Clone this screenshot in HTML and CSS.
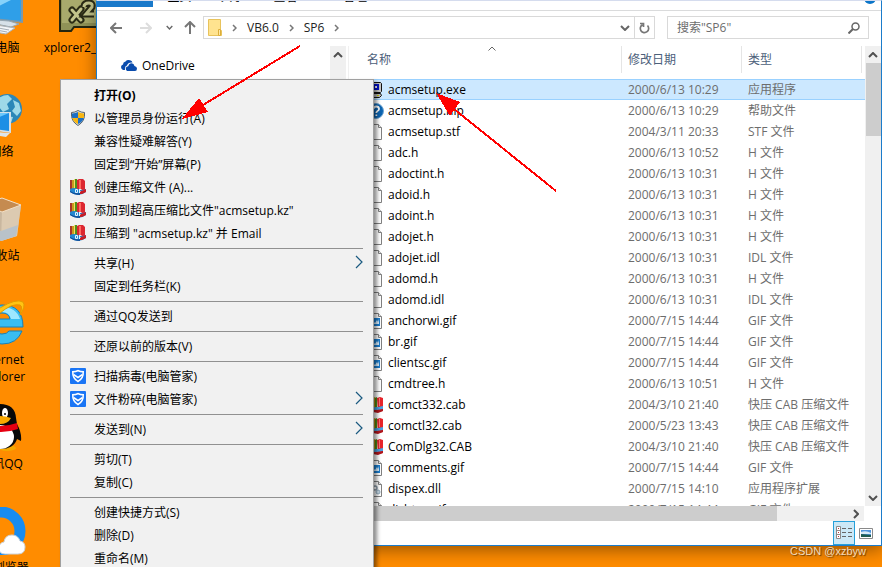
FILE: index.html
```html
<!DOCTYPE html>
<html lang="zh-CN">
<head>
  <meta charset="UTF-8" />
  <title>SP6</title>
  <link rel="stylesheet" href="styles.css">
  <script src="files.js" defer></script>
</head>
<body>
  <svg class="symbols" aria-hidden="true">
    <symbol id="doc" viewBox="0 0 16 16">
      <path d="M2.500 .5h8l3 3v12h-11z" fill="#fff" stroke="#808080"/>
      <path d="M10.500 .5v3h3" fill="#eee" stroke="#808080"/>
    </symbol>
    <symbol id="gif" viewBox="0 0 16 16">
      <use href="#doc"/>
      <path d="M4 5h8v8H4z" fill="#1c7fd0"/>
      <path d="M5 11V8l2 2 2-3 1 2 1-3v5z" fill="#d9efff"/>
    </symbol>
    <symbol id="dll" viewBox="0 0 16 16">
      <use href="#doc"/>
      <circle cx="7" cy="7" r="2" fill="none" stroke="#8a9aa8" stroke-width="1.500"/>
      <circle cx="10" cy="11" r="2" fill="#c6d9e6" stroke="#8fa9bc"/>
    </symbol>
    <symbol id="cab" viewBox="0 0 16 16">
      <path d="M0 1l2-1 3 1v13l-5-1z" fill="#b32025"/>
      <path d="M4 1l2-1 2 1v13H4z" fill="#c79a14"/>
      <path d="M7 1l2-1v14H7z" fill="#4f8a14"/>
      <path d="M9 1l3-1 3 1v13l-5 1z" fill="#e8252b"/>
      <path d="M11 1h1v8h-1z" fill="#ff7d72"/>
      <path d="M0 10q8 1 15-1v3q-7 2-15 0z" fill="#4aa3e4"/>
      <path d="M0 12q8 2 15 0v2l-5 2-10-2z" fill="#b0161c"/>
    </symbol>
    <symbol id="exe" viewBox="0 0 16 16">
      <path d="M2.500 .5h10l1 1v8l-1 1h-10z" fill="#c9c9c9" stroke="#111"/>
      <path d="M4 2h7v6H4z" fill="#0010c8"/>
      <path d="M7 4h2v2H7z" fill="#fff"/>
      <path d="M3.500 11.500h9l1 2-2 2h-8z" fill="#bbb" stroke="#111"/>
      <path d="M9 13h2v1H9z" fill="#c7c700"/>
    </symbol>
    <symbol id="hlp" viewBox="0 0 16 16">
      <circle cx="8" cy="8" r="7.500" fill="#0d64b0" stroke="#6fa5d2"/>
      <path d="M5.500 6q0-2.500 2.700-2.500T11 6q0 1.200-1.500 2Q8.300 8.600 8.300 10M8.300 11.500v1.500" fill="none" stroke="#fff" stroke-width="1.800"/>
    </symbol>
    <symbol id="kz" viewBox="0 0 16 16">
      <path d="M0 1h2v11H0z" fill="#a8342a"/>
      <path d="M2 1h2v11H2z" fill="#c99a1e"/>
      <path d="M4 0h1v12H4z" fill="#f3df62"/>
      <path d="M5 0h2v12H5z" fill="#4d8f1b"/>
      <path d="M7 1l2-1h4l2 2v11l-3 2H7z" fill="#dc2730"/>
      <path d="M9 1h2v9H9z" fill="#ff6a60"/>
      <path d="M0 10q4-2 8 0t8 0v3q-4 3-8 3t-8-3z" fill="#2387d0"/>
      <path d="M0 12q5 3 10 2v2q-6 0-10-3z" fill="#124f9a"/>
      <path d="M10 12q3 0 6-2v3l-4 2h-2z" fill="#c91c24"/>
      <path d="M5.500 10.500h2v3h-2zM9.500 10.500h2M9.500 10v4M9.500 12.500h1" fill="none" stroke="#dff3ff"/>
    </symbol>
    <symbol id="guard" viewBox="0 0 16 16">
      <rect width="16" height="16" rx="1" fill="#1a75f5"/>
      <path d="M8 1.800q2.500 1.200 6 1.200Q14.500 11 8 14.500 1.500 11 2 3 5.500 3 8 1.800z" fill="#fff"/>
      <path d="M8 3.500Q10 4.500 12.500 4.500 12.500 10 8 12.500 3.500 10 3.500 4.500 6 4.500 8 3.500z" fill="#1a75f5"/>
      <path d="M3.500 5.500L8 8.500l4.500-3v2L8 10.500l-4.500-3z" fill="#fff"/>
    </symbol>
    <symbol id="uac" viewBox="0 0 16 16">
      <path d="M8 .5Q11 2.500 14.500 2.500 15.500 11 8 15.500.5 11 1.500 2.500 5 2.500 8 .5z" fill="#dfe5e9" stroke="#56626b"/>
      <path d="M8 2v6H2.200q-.4-2.500-.2-4.500Q5.500 3.300 8 2z" fill="#1c6fc4"/>
      <path d="M8 2v6h5.800q.4-2.500.2-4.500Q10.500 3.300 8 2z" fill="#f7b512"/>
      <path d="M8 14V8H2.200Q3.500 12 8 14z" fill="#f7b512"/>
      <path d="M8 14V8h5.800Q12.500 12 8 14z" fill="#1c6fc4"/>
    </symbol>
    <symbol id="more" viewBox="0 0 8 14">
      <path d="M1 1l6 6-6 6" fill="none" stroke="#1a5a80" stroke-width="1.200"/>
    </symbol>
    <symbol id="sep" viewBox="0 0 5 8">
      <path d="M1 1l3 3-3 3" fill="none" stroke="#777" stroke-width="1.500"/>
    </symbol>
    <symbol id="chev" viewBox="0 0 10 6">
      <path d="M1 1l4 4 4-4" fill="none" stroke="currentColor" stroke-width="2"/>
    </symbol>
  </svg>

  <main class="desktop">
    <ul class="shortcuts">
      <li>
        <svg width="48" height="48" viewBox="0 0 48 48">
          <path d="M4 11l41-4v29L4 31z" fill="#7d98a8"/>
          <path d="M5 12l38-4v26L5 30z" fill="#2f9fe8"/>
          <path d="M5 12l38-4L5 27z" fill="#86d2fa"/>
          <path d="M18 33l13 1 10 3-8 3-20-4z" fill="#d7e1e8" stroke="#93a5b2"/>
          <path d="M12 37l25 4-9 6-22-4z" fill="#f4f6f8" stroke="#aab4bc"/>
          <path d="M15 40l16 3M13 42l16 3" stroke="#a4aeb6"/>
        </svg>
        <span>此电脑</span>
      </li>
      <li>
        <svg width="48" height="48" viewBox="0 0 48 48">
          <path d="M5 4h40v36H19l-3 4H5z" fill="#8f9257" stroke="#25260f" stroke-width="2"/>
          <path d="M7 6h36v30H7z" fill="#a8aa6c"/>
          <path d="M17 23l9 10M26 22L17 33" stroke="#2b2c16" stroke-width="7" stroke-linecap="round"/>
          <path d="M17 23l9 10M26 22L17 33" stroke="#c3c58b" stroke-width="3" stroke-linecap="round"/>
          <path d="M29 20q0-4 5-4 4 0 3 4l-6 7h8" fill="none" stroke="#2b2c16" stroke-width="7"/>
          <path d="M29 20q0-4 5-4 4 0 3 4l-6 7h8" fill="none" stroke="#c3c58b" stroke-width="3"/>
        </svg>
        <span>xplorer2_lite</span>
      </li>
      <li>
        <svg width="48" height="48" viewBox="0 0 48 48">
          <circle cx="29" cy="18" r="15" fill="#2b87b8"/>
          <path d="M17 10q6-6 13-6l4 4-5 5 2 5-6 3-4-5zM35 9l6 3 2 8-4 5-5-5 3-4zM27 25l8 1-2 6z" fill="#9ed9e8"/>
          <path d="M2 21h31v21L2 38z" fill="#d5e0e8"/>
          <path d="M3 22h28v18L3 36z" fill="#1d8fe5"/>
          <path d="M3 22h28L3 34z" fill="#6cc7fa"/>
          <path d="M18 41l14 1-4 4-12-2z" fill="#dde5ea"/>
        </svg>
        <span>网络</span>
      </li>
      <li>
        <svg width="48" height="48" viewBox="0 0 48 48">
          <path d="M5 9l19-6 19 7-4 31-16 5-13-6z" fill="#c9b79f"/>
          <path d="M24 17l19-7-4 31-16 5z" fill="#dccab1"/>
          <path d="M5 9l19-6 19 7-19 7z" fill="#c58b50" stroke="#f4dfc4"/>
          <path d="M8 31l15 5 17-6-2 11-15 5-13-6z" fill="#b9c2c9"/>
        </svg>
        <span>回收站</span>
      </li>
      <li>
        <svg width="48" height="48" viewBox="0 0 48 48">
          <path d="M45 28H16q1 7 8 7 5 0 7-3h13q-5 13-20 13Q4 45 4 25 4 6 24 6q21 0 21 22zM16 20h16q-1-6-8-6t-8 6z" fill="#39bdf1" stroke="#1680b8"/>
          <path d="M8 15Q12 9 24 8q14 0 18 12h-9Q31 12 22 13z" fill="#9de7ff"/>
          <path d="M3 38Q6 21 22 9 38-1 45 3q3 4-3 13 3-9 0-10Q34 4 22 14 8 26 3 38z" fill="#ffc414" stroke="#e39a00"/>
        </svg>
        <span>Internet Explorer</span>
      </li>
      <li>
        <svg width="48" height="48" viewBox="0 0 48 48">
          <ellipse cx="13" cy="45" rx="10" ry="3" fill="#f5a900"/>
          <ellipse cx="29" cy="45" rx="9" ry="3" fill="#f5a900"/>
          <path d="M22 1q15 0 16 14l1 6q5 9 4 17l-4-2q-3 10-17 10T5 36l-4 2q-1-8 4-17l1-6Q7 1 22 1z" fill="#080808"/>
          <ellipse cx="22" cy="34" rx="14" ry="12" fill="#fff"/>
          <ellipse cx="27" cy="10" rx="3" ry="5" fill="#fff"/>
          <circle cx="27" cy="11" r="1" />
          <path d="M11 15q11-4 22 0-3 6-11 6t-11-6z" fill="#f9a800"/>
          <path d="M6 20q16 6 33 0l1 6q-17 6-34 0z" fill="#e60012"/>
        </svg>
        <span>腾讯QQ</span>
      </li>
      <li>
        <svg width="48" height="48" viewBox="0 0 48 48">
          <circle cx="23" cy="24" r="19" fill="none" stroke="#188cf0" stroke-width="11"/>
          <path d="M27 47q-6 0-6-6 0-5 5-6 1-7 8-7 6 0 8 6 5 1 5 6 0 7-7 7z" fill="#fff" stroke="#ccd4dc"/>
        </svg>
        <span>QQ浏览器</span>
      </li>
    </ul>

    <section class="window">
      <div class="ribbon">
        <span class="tab file">文件</span>
        <span class="tab">主页</span>
        <span class="tab">共享</span>
        <span class="tab">查看</span>
        <span class="tab tools">管理</span>
        <i class="help"></i>
      </div>

      <div class="navbar">
        <button class="back" aria-label="后退">
          <svg width="12" height="12" viewBox="0 0 12 12"><path d="M12 6H1M6 1L1 6l5 5" fill="none" stroke="#777" stroke-width="2"/></svg>
        </button>
        <button class="forward" aria-label="前进">
          <svg width="12" height="12" viewBox="0 0 12 12"><path d="M0 6h11M6 1l5 5-5 5" fill="none" stroke="#ddd" stroke-width="2"/></svg>
        </button>
        <button class="recent" aria-label="最近位置">
          <svg width="7" height="5"><use href="#chev"/></svg>
        </button>
        <button class="up" aria-label="上移">
          <svg width="12" height="13" viewBox="0 0 12 13"><path d="M6 13V1M1 6l5-5 5 5" fill="none" stroke="#777" stroke-width="2"/></svg>
        </button>
        <div class="address">
          <svg class="folder" width="14" height="17" viewBox="0 0 14 17">
            <path d="M.5.5h12v10l1 1v5H.5z" fill="#ffe38f" stroke="#e8c35c"/>
            <path d="M10.500 10.500h2v6h-2z" fill="#ffe9a8" stroke="#dcae3a"/>
          </svg>
          <svg width="5" height="8"><use href="#sep"/></svg>
          <a href="#">VB6.0</a>
          <svg width="5" height="8"><use href="#sep"/></svg>
          <a href="#">SP6</a>
          <svg width="5" height="8"><use href="#sep"/></svg>
          <button class="history" aria-label="历史记录"><svg width="10" height="6"><use href="#chev"/></svg></button>
          <button class="refresh" aria-label="刷新">
            <svg width="11" height="12" viewBox="0 0 11 12">
              <path d="M8.500 3.500a4.200 4.200 0 1 1-5-.8M4.500 5V1.500H1" fill="none" stroke="#777" stroke-width="1.700"/>
            </svg>
          </button>
        </div>
        <label class="search">
          <input type="text" placeholder='搜索"SP6"' aria-label="搜索">
          <svg width="12" height="12" viewBox="0 0 12 12">
            <circle cx="7.500" cy="4.500" r="3.500" fill="none" stroke="#666" stroke-width="1.500"/>
            <path d="M5 7L.5 11.500" stroke="#666" stroke-width="2"/>
          </svg>
        </label>
      </div>

      <div class="panes">
        <nav class="tree">
          <a href="#">
            <svg width="16" height="11" viewBox="0 0 16 11">
              <path d="M2 10Q0 9 0 7q0-2 2-2.500Q2 2 4.500 1.500 6-.5 9 .2q2 .5 2.500 2.300Q7 2 6 5.500 3.500 6 4 10z" fill="#0a4cad"/>
              <path d="M6 11Q4.500 10 4.800 8q.4-1.800 2.400-1.800Q8 3.300 10.500 3.300 13 3.500 13.500 6 16 6.500 16 8.500 16 11 14 11z" fill="#0a4cad"/>
            </svg>
            OneDrive
          </a>
        </nav>
        <div class="scroll tree-scroll"><svg width="10" height="6"><use href="#chev"/></svg></div>
        <div class="list">
          <table>
            <colgroup><col><col class="date"><col class="type"><col class="pad"></colgroup>
            <thead>
              <tr>
                <th><span>名称</span><svg class="sorted" width="8" height="5" viewBox="0 0 8 5"><path d="M.5 4.500L4 1l3.500 3.500" fill="none" stroke="#666"/></svg></th>
                <th><span>修改日期</span></th>
                <th><span>类型</span></th>
                <th></th>
              </tr>
            </thead>
            <tbody id="files"></tbody>
          </table>
        </div>
        <div class="scroll list-scroll">
          <svg width="10" height="6"><use href="#chev"/></svg>
          <i></i>
          <svg width="10" height="6"><use href="#chev"/></svg>
        </div>
      </div>

      <div class="bottom-scroll">
        <i></i>
        <svg width="6" height="10" viewBox="0 0 6 10"><path d="M1 1l4 4-4 4" fill="none" stroke="#505050" stroke-width="2"/></svg>
      </div>

      <div class="status">
        <button class="view on" aria-label="详细信息">
          <svg width="16" height="14" viewBox="0 0 16 14">
            <path d="M.5.5h4v12h-4zM.5 4.500h4M.5 8.500h4" fill="#fff" stroke="#8a8a8a"/>
            <path d="M2 2h1v1H2zM2 6h1v1H2zM2 10h1v1H2z" fill="#c33"/>
            <path d="M6 2.500h4M12 2.500h4M6 6.500h4M12 6.500h4M6 10.500h4M12 10.500h4" stroke="#666"/>
          </svg>
        </button>
        <button class="view" aria-label="大图标">
          <svg width="14" height="11" viewBox="0 0 14 11">
            <path d="M.5.5h13v10H.5z" fill="#fff" stroke="#8a8a8a"/>
            <path d="M2 2h10v7H2z" fill="#4f95dc"/>
            <path d="M2 4q5-2 10 1v1H2z" fill="#d8ebf8"/>
            <path d="M2 6l10 1v2H2z" fill="#1f5c50"/>
          </svg>
        </button>
      </div>
    </section>

    <ul class="menu">
      <li class="default"><button>打开(O)</button></li>
      <li><button><svg><use href="#uac"/></svg>以管理员身份运行(A)</button></li>
      <li><button>兼容性疑难解答(Y)</button></li>
      <li><button>固定到“开始”屏幕(P)</button></li>
      <li><button><svg><use href="#kz"/></svg>创建压缩文件 (A)...</button></li>
      <li><button><svg><use href="#kz"/></svg>添加到超高压缩比文件"acmsetup.kz"</button></li>
      <li><button><svg><use href="#kz"/></svg>压缩到 "acmsetup.kz" 并 Email</button></li>
      <li class="line"></li>
      <li class="sub"><button>共享(H)<svg><use href="#more"/></svg></button></li>
      <li><button>固定到任务栏(K)</button></li>
      <li class="line"></li>
      <li><button>通过QQ发送到</button></li>
      <li class="line"></li>
      <li><button>还原以前的版本(V)</button></li>
      <li class="line"></li>
      <li><button><svg><use href="#guard"/></svg>扫描病毒(电脑管家)</button></li>
      <li class="sub"><button><svg><use href="#guard"/></svg>文件粉碎(电脑管家)<svg><use href="#more"/></svg></button></li>
      <li class="line"></li>
      <li class="sub"><button>发送到(N)<svg><use href="#more"/></svg></button></li>
      <li class="line"></li>
      <li><button>剪切(T)</button></li>
      <li><button>复制(C)</button></li>
      <li class="line"></li>
      <li><button>创建快捷方式(S)</button></li>
      <li><button>删除(D)</button></li>
      <li><button>重命名(M)</button></li>
    </ul>

    <svg class="arrows" width="600" height="200" viewBox="0 0 600 200" shape-rendering="crispEdges">
      <path d="M300 46L203 105M556 191L454 109" stroke="#f00" stroke-width="2"/>
      <path d="M182 119l17-21 9 14zM436 93l24 9-10 14z" fill="#f00"/>
    </svg>

    <p class="credit">CSDN @xzbyw</p>
  </main>
</body>
</html>
```
FILE: styles.css
```css
body {
  margin: 0;
  font: 12px/17px "Open Sans", "Noto Sans CJK SC", sans-serif;
  color: #000;
}
ul, p {
  margin: 0;
  padding: 0;
  list-style: none;
}
button {
  margin: 0;
  padding: 0;
  border: 0;
  background: none;
  font: inherit;
  color: inherit;
}
a {
  color: inherit;
  text-decoration: none;
}
svg {
  display: block;
  flex-shrink: 0;
}
.symbols {
  position: absolute;
  width: 0;
  height: 0;
}

.desktop {
  position: relative;
  height: 100vh;
  overflow: hidden;
  background: #ff8c00;
}

/* desktop icons */
.shortcuts {
  position: absolute;
  left: -36px;
  top: -13px;
  display: grid;
  grid-template-columns: 75px 79px;
  grid-auto-rows: 104px;
}
.shortcuts li {
  grid-column: 1;
  display: flex;
  flex-direction: column;
  align-items: center;
  gap: 4px;
  text-align: center;
}
.shortcuts li:nth-child(1) {
  grid-row: 1;
}
.shortcuts li:nth-child(2) {
  grid-column: 2;
  grid-row: 1;
}

/* explorer window */
.window {
  position: absolute;
  left: 96px;
  right: 0;
  top: 0;
  bottom: 21px;
  display: flex;
  flex-direction: column;
  border: 1px solid #1b7ccb;
  border-top-color: #d5dcee;
  background: #fff;
  box-shadow: 0 4px 16px rgba(0, 0, 0, 0.4);
}

.ribbon {
  position: relative;
  height: 9px;
  display: flex;
  align-items: flex-start;
  overflow: hidden;
  border-bottom: 1px solid #dadbdc;
}
.tab {
  width: 53px;
  margin-top: -13px;
  line-height: 17px;
  text-align: center;
}
.tab.file {
  width: 56px;
  height: 19px;
  background: #1979ca;
  color: #1979ca;
}
.tab.tools {
  width: 86px;
}
.help {
  position: absolute;
  right: 5px;
  top: -9px;
  width: 12px;
  height: 12px;
  border-radius: 50%;
  background: #0b75c9;
}

.navbar {
  display: flex;
  align-items: center;
  padding: 5px 12px 7px 13px;
  color: #666;
}
.forward {
  margin-left: 18px;
}
.recent {
  margin-left: 14px;
}
.up {
  margin-left: 11px;
}
.address {
  flex: 1;
  display: flex;
  align-items: center;
  gap: 10px;
  height: 21px;
  margin-left: 7px;
  padding-left: 4px;
  border: 1px solid #d9d9d9;
  color: #222;
}
.history {
  margin: 0 -6px 0 auto;
  color: #666;
}
.refresh {
  align-self: stretch;
  width: 20px;
  border-left: 1px solid #d9d9d9;
}
.refresh svg {
  margin: 0 auto;
}
.search {
  display: flex;
  align-items: center;
  width: 192px;
  height: 21px;
  margin-left: 12px;
  padding-right: 8px;
  border: 1px solid #d9d9d9;
}
.search input {
  flex: 1;
  min-width: 0;
  padding: 0 0 0 9px;
  border: 0;
  outline: 0;
  background: none;
  font: inherit;
}
.search input::placeholder {
  color: #6d6d6d;
}

.panes {
  flex: 1;
  min-height: 0;
  display: flex;
}
.tree {
  width: 233px;
}
.tree a {
  display: flex;
  align-items: center;
  gap: 5px;
  padding: 11px 0 0 24px;
}
.scroll {
  width: 16px;
  display: flex;
  flex-direction: column;
  align-items: center;
  background: #f0f0f0;
  color: #505050;
}
.scroll svg:first-child {
  margin: 6px 0 5px;
  transform: rotate(180deg);
}
.tree-scroll {
  margin-right: 2px;
}
.list-scroll i {
  width: 15px;
  height: 73px;
  background: #cdcdcd;
}
.list-scroll svg:last-child {
  margin: auto 0 5px;
}

.list {
  flex: 1;
  overflow: hidden;
  border-left: 1px solid #f0f0f0;
}
table {
  width: 100%;
  table-layout: fixed;
  border-collapse: separate;
  border-spacing: 0;
}
.date, .type {
  width: 120px;
}
.pad {
  width: 3px;
}
th {
  position: relative;
  height: 33px;
  padding: 0;
  vertical-align: top;
  text-align: left;
  font-weight: normal;
  color: #4c607a;
}
th span {
  display: block;
  padding-left: 6px;
  border-right: 1px solid #e5e5e5;
  line-height: 27px;
}
th:first-child span {
  padding-left: 18px;
}
.sorted {
  position: absolute;
  left: calc(50% + 2px);
  top: 0;
}
td {
  height: 19px;
  padding: 0 0 0 6px;
  border: solid transparent;
  border-width: 1px 0;
  color: #6d6d6d;
  white-space: nowrap;
}
td:last-child {
  padding: 0;
}
.name {
  display: flex;
  align-items: center;
  gap: 4px;
  padding-left: 13px;
  color: #000;
}
.name svg {
  width: 16px;
  height: 16px;
}
.selected td {
  border-color: #99d1ff;
  background: #cce8ff;
}

.bottom-scroll {
  display: flex;
  align-items: center;
  justify-content: space-between;
  height: 15px;
  margin: 0 17px 0 252px;
  padding-right: 5px;
  background: #f0f0f0;
}
.bottom-scroll i {
  width: 84%;
  height: 15px;
  background: #cdcdcd;
}
.status {
  display: flex;
  justify-content: flex-end;
  gap: 3px;
  height: 24px;
  padding-right: 7px;
}
.view {
  padding: 0 1px;
}
.view.on {
  padding: 0 2px;
  border: 1px solid #26a0da;
  background: #cbe8f6;
}

/* context menu */
.menu {
  position: absolute;
  left: 60px;
  top: 79px;
  width: 312px;
  padding: 4px 0;
  border: 1px solid #a0a0a0;
  background: #f1f1f1;
  box-shadow: 3px 3px 4px rgba(0, 0, 0, 0.45);
}
.menu button {
  position: relative;
  display: block;
  width: 100%;
  padding-left: 33px;
  line-height: 23px;
  text-align: left;
}
.menu svg {
  position: absolute;
  left: 9px;
  top: 3px;
  width: 16px;
  height: 16px;
}
.menu .sub svg:last-child {
  left: auto;
  right: 10px;
  width: 8px;
  height: 14px;
}
.default {
  font-weight: bold;
}
.line {
  height: 1px;
  margin: 3px 10px 3px 9px;
  background: #919191;
}

.arrows {
  position: absolute;
  left: 0;
  top: 0;
  pointer-events: none;
}
.credit {
  position: absolute;
  right: 16px;
  bottom: 7px;
  font-family: "Liberation Sans", sans-serif;
  font-size: 11px;
  color: #f3dcbd;
  text-shadow: 1px 1px 1px rgba(0, 0, 0, 0.5);
}
```
FILE: files.js
```js
const files = [
  ['exe', 'acmsetup.exe', '2000/6/13 10:29', '应用程序'],
  ['hlp', 'acmsetup.hlp', '2000/6/13 10:29', '帮助文件'],
  ['doc', 'acmsetup.stf', '2004/3/11 20:33', 'STF 文件'],
  ['doc', 'adc.h', '2000/6/13 10:52', 'H 文件'],
  ['doc', 'adoctint.h', '2000/6/13 10:31', 'H 文件'],
  ['doc', 'adoid.h', '2000/6/13 10:31', 'H 文件'],
  ['doc', 'adoint.h', '2000/6/13 10:31', 'H 文件'],
  ['doc', 'adojet.h', '2000/6/13 10:31', 'H 文件'],
  ['doc', 'adojet.idl', '2000/6/13 10:31', 'IDL 文件'],
  ['doc', 'adomd.h', '2000/6/13 10:31', 'H 文件'],
  ['doc', 'adomd.idl', '2000/6/13 10:31', 'IDL 文件'],
  ['gif', 'anchorwi.gif', '2000/7/15 14:44', 'GIF 文件'],
  ['gif', 'br.gif', '2000/7/15 14:44', 'GIF 文件'],
  ['gif', 'clientsc.gif', '2000/7/15 14:44', 'GIF 文件'],
  ['doc', 'cmdtree.h', '2000/6/13 10:51', 'H 文件'],
  ['cab', 'comct332.cab', '2004/3/10 21:40', '快压 CAB 压缩文件'],
  ['cab', 'comctl32.cab', '2000/5/23 13:43', '快压 CAB 压缩文件'],
  ['cab', 'ComDlg32.CAB', '2004/3/10 21:40', '快压 CAB 压缩文件'],
  ['gif', 'comments.gif', '2000/7/15 14:44', 'GIF 文件'],
  ['dll', 'dispex.dll', '2000/7/15 14:10', '应用程序扩展'],
  ['gif', 'disbtns.gif', '2000/7/15 14:44', 'GIF 文件']
]

document.getElementById('files').innerHTML = files.map(([icon, name, date, type], i) => `
  <tr${i === 0 ? ' class="selected"' : ''}>
    <td><div class="name"><svg><use href="#${icon}"/></svg>${name}</div></td>
    <td>${date}</td>
    <td>${type}</td>
    <td></td>
  </tr>`).join('')
```
